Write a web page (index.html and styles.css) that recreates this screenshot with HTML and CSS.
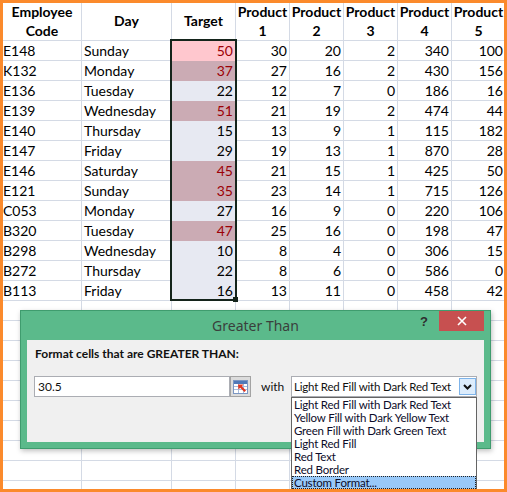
FILE: index.html
```html
<!DOCTYPE html>
<html>
<head>
<meta charset="utf-8">
<link rel="stylesheet" href="styles.css">
</head>
<body>
<div class="frame">
  <div class="sheet">
    <div class="c h">Employee<br>Code</div>
    <div class="c h">Day</div>
    <div class="c h">Target</div>
    <div class="c h">Product<br>1</div>
    <div class="c h">Product<br>2</div>
    <div class="c h">Product<br>3</div>
    <div class="c h">Product<br>4</div>
    <div class="c h">Product<br>5</div>

    <div class="c a">E148</div><div class="c">Sunday</div><div class="c n tg act">50</div><div class="c n">30</div><div class="c n">20</div><div class="c n">2</div><div class="c n">340</div><div class="c n">100</div>
    <div class="c a">K132</div><div class="c">Monday</div><div class="c n tg hi">37</div><div class="c n">27</div><div class="c n">16</div><div class="c n">2</div><div class="c n">430</div><div class="c n">156</div>
    <div class="c a">E136</div><div class="c">Tuesday</div><div class="c n tg sel">22</div><div class="c n">12</div><div class="c n">7</div><div class="c n">0</div><div class="c n">186</div><div class="c n">16</div>
    <div class="c a">E139</div><div class="c">Wednesday</div><div class="c n tg hi">51</div><div class="c n">21</div><div class="c n">19</div><div class="c n">2</div><div class="c n">474</div><div class="c n">44</div>
    <div class="c a">E140</div><div class="c">Thursday</div><div class="c n tg sel">15</div><div class="c n">13</div><div class="c n">9</div><div class="c n">1</div><div class="c n">115</div><div class="c n">182</div>
    <div class="c a">E147</div><div class="c">Friday</div><div class="c n tg sel">29</div><div class="c n">19</div><div class="c n">13</div><div class="c n">1</div><div class="c n">870</div><div class="c n">28</div>
    <div class="c a">E146</div><div class="c">Saturday</div><div class="c n tg hi">45</div><div class="c n">21</div><div class="c n">15</div><div class="c n">1</div><div class="c n">425</div><div class="c n">50</div>
    <div class="c a">E121</div><div class="c">Sunday</div><div class="c n tg hi">35</div><div class="c n">23</div><div class="c n">14</div><div class="c n">1</div><div class="c n">715</div><div class="c n">126</div>
    <div class="c a">C053</div><div class="c">Monday</div><div class="c n tg sel">27</div><div class="c n">16</div><div class="c n">9</div><div class="c n">0</div><div class="c n">220</div><div class="c n">106</div>
    <div class="c a">B320</div><div class="c">Tuesday</div><div class="c n tg hi">47</div><div class="c n">25</div><div class="c n">16</div><div class="c n">0</div><div class="c n">198</div><div class="c n">47</div>
    <div class="c a">B298</div><div class="c">Wednesday</div><div class="c n tg sel">10</div><div class="c n">8</div><div class="c n">4</div><div class="c n">0</div><div class="c n">306</div><div class="c n">15</div>
    <div class="c a">B272</div><div class="c">Thursday</div><div class="c n tg sel">22</div><div class="c n">8</div><div class="c n">6</div><div class="c n">0</div><div class="c n">586</div><div class="c n">0</div>
    <div class="c a">B113</div><div class="c">Friday</div><div class="c n tg sel">16</div><div class="c n">13</div><div class="c n">11</div><div class="c n">0</div><div class="c n">458</div><div class="c n">42</div>

    <div class="c"></div><div class="c"></div><div class="c"></div><div class="c"></div><div class="c"></div><div class="c"></div><div class="c"></div><div class="c"></div>
    <div class="c"></div><div class="c"></div><div class="c"></div><div class="c"></div><div class="c"></div><div class="c"></div><div class="c"></div><div class="c"></div>
    <div class="c"></div><div class="c"></div><div class="c"></div><div class="c"></div><div class="c"></div><div class="c"></div><div class="c"></div><div class="c"></div>
    <div class="c"></div><div class="c"></div><div class="c"></div><div class="c"></div><div class="c"></div><div class="c"></div><div class="c"></div><div class="c"></div>
    <div class="c"></div><div class="c"></div><div class="c"></div><div class="c"></div><div class="c"></div><div class="c"></div><div class="c"></div><div class="c"></div>
    <div class="c"></div><div class="c"></div><div class="c"></div><div class="c"></div><div class="c"></div><div class="c"></div><div class="c"></div><div class="c"></div>
    <div class="c"></div><div class="c"></div><div class="c"></div><div class="c"></div><div class="c"></div><div class="c"></div><div class="c"></div><div class="c"></div>
    <div class="c"></div><div class="c"></div><div class="c"></div><div class="c"></div><div class="c"></div><div class="c"></div><div class="c"></div><div class="c"></div>
    <div class="c"></div><div class="c"></div><div class="c"></div><div class="c"></div><div class="c"></div><div class="c"></div><div class="c"></div><div class="c"></div>
    <div class="c"></div><div class="c"></div><div class="c"></div><div class="c"></div><div class="c"></div><div class="c"></div><div class="c"></div><div class="c"></div>
  </div>

  <div class="selection"><span class="handle"></span></div>

  <div class="dialog">
    <div class="titlebar">
      <div></div>
      <div class="title">Greater Than</div>
      <div class="controls">
        <span class="help">?</span>
        <span class="close">
          <svg width="10" height="10" viewBox="0 0 10 10"><path d="M1 1L9 9M9 1L1 9" stroke="#fff" stroke-width="1.6" fill="none"/></svg>
        </span>
      </div>
    </div>
    <div class="panel">
      <div class="label">Format cells that are GREATER THAN:</div>
      <div class="row">
        <div class="input">30.5</div>
        <div class="refbtn">
          <svg width="15" height="14" viewBox="0 0 15 14">
            <rect x="0.5" y="0.5" width="14" height="13" fill="#fff" stroke="#7b96c2"/>
            <rect x="1" y="1" width="13" height="3" fill="#5079b8"/>
            <path d="M1 6.5H14M1 9.5H14M5.5 4V13M10.5 4V13" stroke="#a9bcdc" stroke-width="1"/>
            <path d="M5 4.5L10.5 4.5L8.8 6.2L13 10.4L11.4 12L7.2 7.8L5.5 9.5Z" fill="#e2361f"/>
          </svg>
        </div>
        <div class="with">with</div>
        <div class="combo">
          <span class="combo-text">Light Red Fill with Dark Red Text</span>
          <span class="dropbtn">
            <svg width="9" height="6" viewBox="0 0 9 6"><path d="M1 1L4.5 4.5L8 1" stroke="#111" stroke-width="2" fill="none"/></svg>
          </span>
          <ul class="list">
            <li>Light Red Fill with Dark Red Text</li>
            <li>Yellow Fill with Dark Yellow Text</li>
            <li>Green Fill with Dark Green Text</li>
            <li>Light Red Fill</li>
            <li>Red Text</li>
            <li>Red Border</li>
            <li class="current">Custom Format...</li>
          </ul>
        </div>
      </div>
    </div>
  </div>
</div>
</body>
</html>
```

FILE: styles.css
```css
* { box-sizing: border-box; }

html, body {
  margin: 0;
  padding: 0;
  background: #fff;
}

.frame {
  position: relative;
  width: 507px;
  height: 492px;
  border: 3px solid #fb8a2c;
  overflow: hidden;
  background: #fff;
  font-family: Lato, "Liberation Sans", sans-serif;
}

/* ---------- spreadsheet ---------- */
.sheet {
  display: grid;
  grid-template-columns: 79px 90px 64px 54px 54px 54px 54px 54px;
  grid-template-rows: 38px;
  grid-auto-rows: 20px;
  font-size: 14px;
  color: #000;
}

.c {
  display: flex;
  align-items: flex-end;
  padding: 0 2px;
  line-height: 19px;
  white-space: nowrap;
  border-right: 1px solid #d4dae5;
  border-bottom: 1px solid #d4dae5;
}

.c.a { padding-left: 0; }

.c.h {
  font-weight: 700;
  justify-content: center;
  align-items: center;
  text-align: center;
  line-height: 19px;
  padding: 0 0 2px;
}

.c.n { justify-content: flex-end; }

.tg.sel { background: #e7e9f2; border-bottom-color: #e7e9f2; }
.tg.hi  { background: #cbabb4; border-bottom-color: #cbabb4; color: #9c0006; }
.tg.act { background: #ffc7ce; border-bottom-color: #ffc7ce; color: #9c0006; }

.selection {
  position: absolute;
  left: 167px;
  top: 36px;
  width: 67px;
  height: 262px;
  border: 2px solid #14241b;
}

.handle {
  position: absolute;
  right: -3px;
  bottom: -3px;
  width: 5px;
  height: 5px;
  background: #14241b;
}

/* ---------- dialog ---------- */
.dialog {
  position: absolute;
  left: 17px;
  top: 307px;
  width: 471px;
  background: #5bba8b;
  border: 1px solid #3f9c6e;
  padding: 0 6px 6px;
  box-shadow: 1px 2px 5px rgba(0, 0, 0, 0.25);
}

.titlebar {
  display: grid;
  grid-template-columns: 1fr auto 1fr;
  height: 29px;
}

.title {
  font-family: "Noto Sans", "Open Sans", sans-serif;
  font-size: 14px;
  line-height: 29px;
  color: #3a3f3c;
}

.controls {
  justify-self: end;
  display: flex;
  align-items: flex-start;
}

.help {
  font-family: "Liberation Sans", sans-serif;
  font-weight: 700;
  font-size: 13px;
  line-height: 20px;
  color: #2e2e2e;
  margin-right: 11px;
  margin-top: 1px;
}

.close {
  width: 45px;
  height: 20px;
  background: #c75050;
  display: flex;
  align-items: center;
  justify-content: center;
}

.panel {
  height: 102px;
  background: #f0f0f0;
  padding: 6px 7px 0 7px;
  font-family: Lato, "Liberation Sans", sans-serif;
  font-size: 11.5px;
  color: #111;
}

.label {
  font-weight: 700;
  font-size: 12px;
  line-height: 15px;
  padding-left: 1px;
}

.row {
  display: flex;
  align-items: center;
  margin-top: 15px;
}

.input {
  width: 196px;
  height: 21px;
  border: 1px solid #abadb3;
  background: #fff;
  line-height: 19px;
  padding-left: 3px;
  font-size: 12px;
}

.refbtn {
  width: 21px;
  height: 21px;
  border: 1px solid #a3a3a3;
  background: #dcdcdc;
  display: flex;
  align-items: center;
  justify-content: center;
}

.with {
  margin-left: 10px;
  line-height: 19px;
  font-size: 12px;
}

.combo {
  position: relative;
  margin-left: auto;
  width: 186px;
  height: 21px;
  border: 1px solid #abadb3;
  background: #fff;
  display: flex;
  align-items: flex-start;
  letter-spacing: -0.2px;
}

.combo-text {
  flex: 1;
  min-width: 0;
  white-space: nowrap;
  line-height: 19px;
  padding-left: 2px;
}

.dropbtn {
  flex: none;
  width: 17px;
  height: 17px;
  margin-top: 1px;
  border: 1px solid #7eb4ea;
  background: #dcecfc;
  display: flex;
  align-items: center;
  justify-content: center;
}

.list {
  position: absolute;
  left: -1px;
  top: 20px;
  width: 186px;
  margin: 0;
  padding: 0 0 4px;
  list-style: none;
  background: #fff;
  border: 1px solid #646464;
}

.list li {
  line-height: 13px;
  height: 13px;
  padding-left: 2px;
  white-space: nowrap;
  color: #0c0c2a;
}

.list li.current {
  background: #99c9f9;
  outline: 1px dotted #222;
  outline-offset: -1px;
}
```
